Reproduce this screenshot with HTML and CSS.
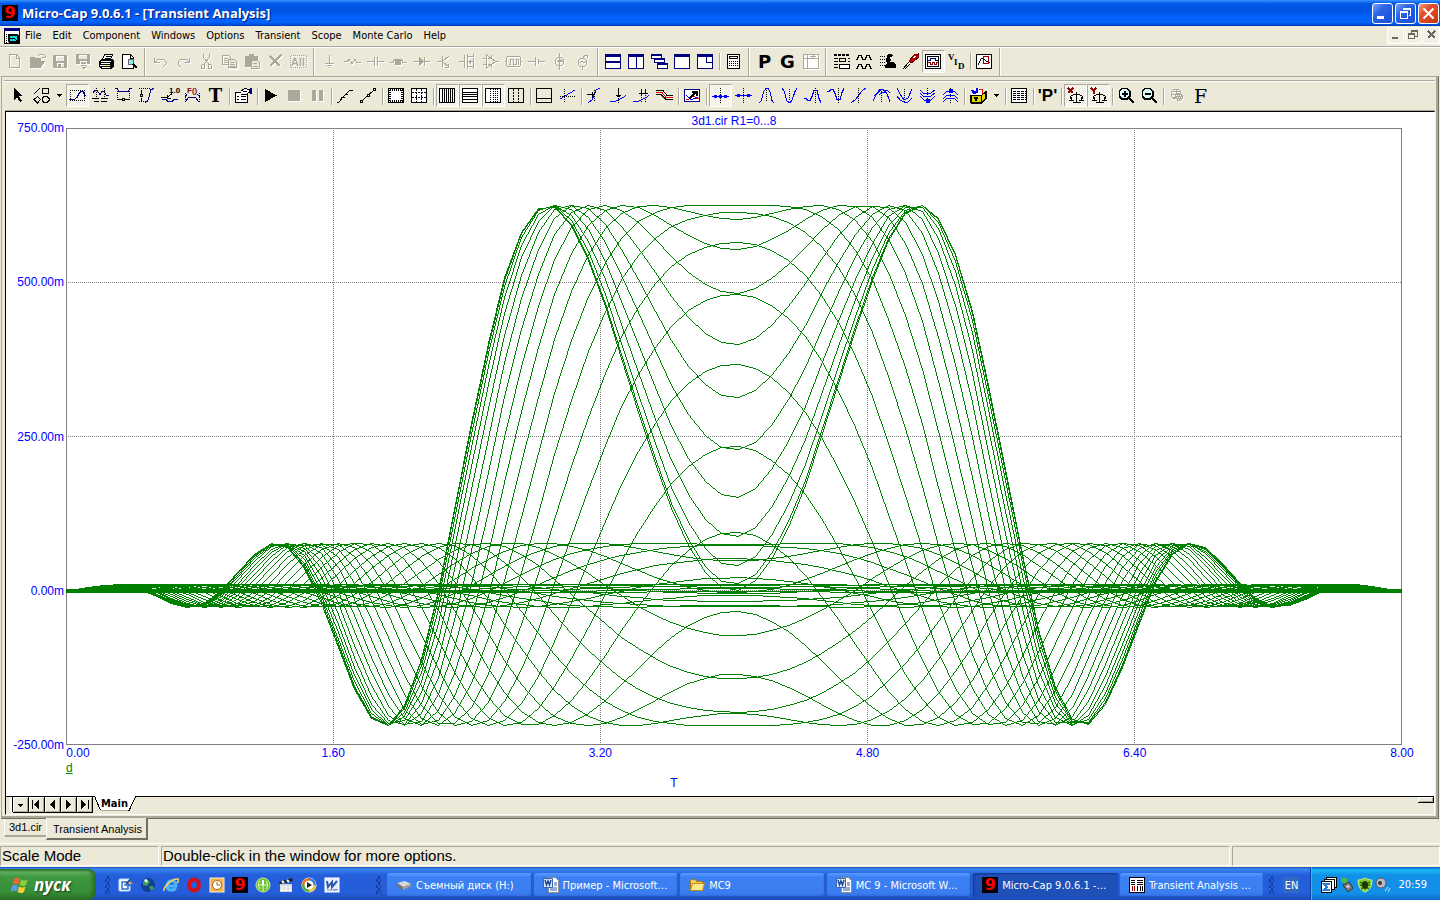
FILE: index.html
```html
<!DOCTYPE html>
<html lang="en">
<head>
    <meta charset="UTF-8">
    <meta name="viewport" content="width=device-width, initial-scale=1.0">
    <title>Micro-Cap 9.0.6.1 - [Transient Analysis]</title>
    <link rel="stylesheet" href="styles.css">
</head>
<body>

    <header class="title-bar">
        <span class="mc-logo">9</span>
        <h1>Micro-Cap 9.0.6.1 - [Transient Analysis]</h1>
        <div class="window-buttons">
            <button aria-label="Minimize"><svg viewBox="0 0 19 19"><path class="fw" d="M4 12h7v3H4z"/></svg></button>
            <button aria-label="Restore"><svg viewBox="0 0 19 19"><path class="w" d="M7.5 6V4.5h7v7H13M7 5.5h8M4.5 7.5h7v7h-7zM4 8.5h8"/></svg></button>
            <button class="close" aria-label="Close"><svg viewBox="0 0 19 19"><path class="w thick soft" d="M4.5 4.5l10 10M14.5 4.5l-10 10"/></svg></button>
        </div>
    </header>

    <nav class="menu-bar">
        <svg class="doc-icon" viewBox="0 0 17 17"><path class="fw" d="M0 0h16v16H0z"/><path class="fn" d="M0 0h16v3H0z"/><path d="M.5 3V15.500h15V3"/><path fill="#00e0e0" d="M5 7h9v7H5z"/><path d="M4.5 6.5h9v7h-9zM5 12l2-2h3l2 2h1"/><path class="dot" d="M2.5 6v9"/></svg>
        <button>File</button>
        <button>Edit</button>
        <button>Component</button>
        <button>Windows</button>
        <button>Options</button>
        <button>Transient</button>
        <button>Scope</button>
        <button>Monte Carlo</button>
        <button>Help</button>
        <div class="child-buttons">
            <button aria-label="Minimize document"><svg viewBox="0 0 15 15"><path class="thick" d="M4 10h6"/></svg></button>
            <button aria-label="Restore document"><svg viewBox="0 0 15 15"><path d="M5.5 5V2.5h6v6H9M5 3.5h7M2.5 5.5h6v5h-6zM2 6.5h7"/></svg></button>
            <button aria-label="Close document"><svg viewBox="0 0 15 15"><path class="thick" d="M4 3l7 7M11 3l-7 7"/></svg></button>
        </div>
    </nav>

    <div class="toolbar main-tools">
        <div class="group off">
            <button aria-label="New"><svg viewBox="0 0 17 17"><path d="M3.5 1.5h7l3 3v10h-10zM10.5 2v3h3"/></svg></button>
            <button aria-label="Open"><svg viewBox="0 0 17 17"><path class="fc" d="M1 4h4l1 1h6v3h4l-4 7H1z"/><path d="M9 3l2-2h3l2 2v2M13 4h3"/></svg></button>
            <button aria-label="Save"><svg viewBox="0 0 17 17"><path class="fc" fill-rule="evenodd" d="M1 2h14v13H2l-1-1zM4 3v5h8V3zM5 10v4h1v-3h3v3h3v-4z"/></svg></button>
            <button aria-label="Save as"><svg viewBox="0 0 17 17"><path class="fc" fill-rule="evenodd" d="M1 1h14v10H1zM4 2v4h8V2zM5 8v3h1V9h5v2h1V8zM6 12h5v2H6zM5 13h7l-3 4z"/></svg></button>
            <button class="on" aria-label="Print"><svg viewBox="0 0 17 17"><path class="fw" d="M4 7l2-6h8l-2 6z"/><path d="M4.5 6.5l2-5h8l-2 5M8 3.5h5M7 5.5h5"/><path class="fk" d="M1 8l3-2h11l1 2v5l-3 3H3l-2-2z"/><path class="w" d="M3 8.5h10M2 12.5h9"/><path class="y" d="M8 12.5h4"/><path class="w" d="M3 10.5h9M4 14.5h8"/></svg></button>
            <button class="on" aria-label="Print preview"><svg viewBox="0 0 17 17"><path class="fw" d="M1.5 1.5h8l3 3v11h-11z"/><path d="M1.5 1.5h8l3 3v11h-11zM9.5 2v3h3"/><circle cx="10" cy="9" r="3" fill="#8ee" stroke="#666"/><path class="thick" d="M12 11l4 4"/></svg></button>
        </div>
        <div class="group off">
            <button aria-label="Undo"><svg viewBox="0 0 17 17"><path d="M2.5 5v5M2.5 9.5h5M3 9l3-3h5l3 3v2l-2 2h-1"/></svg></button>
            <button aria-label="Redo"><svg viewBox="0 0 17 17"><path d="M14.5 5v5M14.5 9.5h-5M14 9l-3-3H6L3 9v2l2 2h1"/></svg></button>
            <button aria-label="Cut"><svg viewBox="0 0 17 17"><path d="M5.5 1v3l5 7M11.5 1v3l-5 7M8.5 7v2"/><path d="M4.5 11.5h2v4h-3v-3zM10.5 11.5h2l1 1v3h-3z"/></svg></button>
            <button aria-label="Copy"><svg viewBox="0 0 17 17"><path d="M1.5 2.5h6l2 2v7h-8zM3 5.5h4M3 7.5h5M3 9.5h4"/><path class="fb" d="M7 6h7l3 3v7H7z"/><path d="M7.5 6.5h6l2 2v6h-8zM9 9.5h4M9 11.5h5M9 13.5h5"/></svg></button>
            <button aria-label="Paste"><svg viewBox="0 0 17 17"><path class="fc" d="M1 3h4V1h5v2h4v11H1z"/><path class="fb" d="M7 8h8v8H7z"/><path d="M7.5 7.5h6l2 2v6h-8zM9 10.5h4M9 13.5h5"/></svg></button>
            <button aria-label="Delete"><svg viewBox="0 0 17 17"><path class="thick" d="M3 3l10 10M14 2L3 13"/></svg></button>
            <button aria-label="Select all"><svg viewBox="0 0 17 17"><path class="dot" d="M.5 2.5h16M.5 14.5h16M.5 2.5v12M16.5 2.5v12"/><text x="1" y="13" font-size="11">All</text></svg></button>
        </div>
        <div class="group off">
            <button aria-label="Ground"><svg viewBox="0 0 17 17"><path d="M8.5 2v8M4 10.5h9M6 12.5h5M8 14.5h1"/></svg></button>
            <button aria-label="Resistor"><svg viewBox="0 0 17 17"><path d="M0 8.5h3l2-2 3 4 3-4 2 3h4"/></svg></button>
            <button aria-label="Capacitor"><svg viewBox="0 0 17 17"><path d="M0 8.5h7M7.5 4v9M10.5 4v9M11 8.5h6"/></svg></button>
            <button aria-label="Inductor"><svg viewBox="0 0 17 17"><path d="M0 9.5h3.5V8l1.500-1.500L6.500 8v3h-1V8L7 6.500 8.500 8v3h-1V8L9 6.500 10.500 8v3h-1V8L11 6.500 12.500 8v1.500H17"/></svg></button>
            <button aria-label="Diode"><svg viewBox="0 0 17 17"><path d="M0 8.5h17M11.5 4v9"/><path class="fc" d="M6 4l5 5-5 4z"/></svg></button>
            <button aria-label="NPN transistor"><svg viewBox="0 0 17 17"><path d="M1 8.5h5M6.5 3v11M7 8l6-5M7 9l6 5M12.5 11v3M9 14.5h4"/></svg></button>
            <button aria-label="MOSFET"><svg viewBox="0 0 17 17"><path d="M0 8.5h5M5.5 2v13M8.5 1v15M9 3.5h5V1M9 8.5h5M9 13.5h5V16M14.5 5v8"/><path class="fc" d="M9 9l3-3v6z"/></svg></button>
            <button aria-label="Op amp"><svg viewBox="0 0 17 17"><path d="M4.5 2v13l9-6.500zM1 5.5h3M1 11.5h3M13 8.5h4M9.5 2v3M9.5 12v3M6 5.5h2M6 11.5h2"/></svg></button>
            <button aria-label="Pulse source"><svg viewBox="0 0 17 17"><path d="M2.5 3.5h12l1 1v8l-1 1h-12l-1-1v-8zM4 11.5h1.500v-5h3v5h3v-5h2v5M0 8.5h1M16 8.5h1"/></svg></button>
            <button aria-label="Battery"><svg viewBox="0 0 17 17"><path d="M0 8.5h7M7.5 4v9M10.5 6v5M11 8.5h6"/></svg></button>
            <button aria-label="Current source"><svg viewBox="0 0 17 17"><path d="M8.5 0v17M6.5 4.5h4l2 2v4l-2 2h-4l-2-2v-4z"/><path class="fc" d="M6 9l3-4 3 4z"/></svg></button>
            <button aria-label="Sine source"><svg viewBox="0 0 17 17"><path d="M6.5 5.5h4l2 2v4l-2 2h-4l-2-2v-4zM9 5l2-3h3M8.5 14v3M13.5 2v3M6 10l2-2 2 2 2-2"/></svg></button>
        </div>
        <div class="group navy">
            <button aria-label="Tile horizontal"><svg viewBox="0 0 17 17"><path class="fw" d="M1 1h15v15H1z"/><path d="M.5 1.5h15v14H.5z"/><path class="thick" d="M1 3h15M1 9h15"/></svg></button>
            <button aria-label="Tile vertical"><svg viewBox="0 0 17 17"><path class="fw" d="M1 1h15v15H1z"/><path d="M.5 1.5h15v14H.5zM8.5 2v14"/><path class="thick" d="M1 3h15"/></svg></button>
            <button aria-label="Cascade"><svg viewBox="0 0 17 17"><path class="fw" d="M1 1h10v4h3v5h3v5H6v-4H3V6H1z"/><path d="M.5 1.5h10v4H.5zM3.5 5.5h10v4h-10zM6.5 10.500h10v5h-10z"/><path class="thick" d="M1 2h10M4 6h10M7 11h10"/></svg></button>
            <button aria-label="Maximize"><svg viewBox="0 0 17 17"><path class="fw" d="M1 1h15v15H1z"/><path d="M.5 1.5h15v14H.5z"/><path class="thick" d="M1 3h15"/></svg></button>
            <button aria-label="Overlap"><svg viewBox="0 0 17 17"><path class="fw" d="M1 1h15v15H1z"/><path d="M.5 1.5h15v14H.5zM9.5 3v6h6"/><path class="thick" d="M1 3h15"/></svg></button>
            <i class="sep"></i>
            <button class="black" aria-label="Calculator"><svg viewBox="0 0 17 17"><path class="fw" d="M2 1h13v14H2z"/><path d="M2.5 1.5h12v14h-12zM4.5 3.5h8v2h-8z"/><path class="dot" d="M4 8.5h10M4 10.500h10M4 12.500h10"/></svg></button>
        </div>
        <div class="group">
            <button class="letter">P</button>
            <button class="letter">G</button>
            <button class="dim" aria-label="Spreadsheet"><svg viewBox="0 0 17 17"><path class="fw" d="M1 1h16v15H1z"/><path d="M1.5 1.5h15v14h-15zM2 5.5h14M5.5 2v14M11.5 2v3M8 3.5h6"/></svg></button>
        </div>
        <div class="group">
            <button aria-label="Components panel"><svg viewBox="0 0 17 17"><path class="dash" d="M1 2h15"/><path d="M1 5.5h4M1 8.5h4M1 11.5h4M1 14.5h4M6.5 5.5h6v3h-6zM15 5.5h2M15 8.5h2"/><path class="fw" d="M7 11h9v4H7z"/><path d="M6.5 11.5h10v4h-10z"/></svg></button>
            <button aria-label="Waveforms"><svg viewBox="0 0 17 17"><path d="M0 6.500h1l2-4h2l2 4h2l2-4h2l2 4h1M0 15.500h1l2-4h2l2 4h2l2-4h2l2 4h1"/></svg></button>
            <button aria-label="Animate"><svg viewBox="0 0 17 17"><path class="dot" d="M1 3.5h6M1 6.5h5M1 9.5h6M1 12.5h6"/><path class="fk" d="M9 1h4l1 2-3 1 1 3-2 2h4l3 3v3H6v-3l2-1-1-4z"/></svg></button>
            <button aria-label="Probe"><svg viewBox="0 0 17 17"><path d="M1 16l6-7M3 16l5-5"/><path fill="#d00000" stroke="#600" d="M7 8l5-6 4-1v4L9 10z"/><path class="w" d="M11 5l3-2"/></svg></button>
            <button class="pressed" aria-label="Run analysis"><svg viewBox="0 0 17 17"><path class="fw" d="M1 1h15v15H1z"/><path d="M.5 1.5h15v14H.5zM2.5 3.5h11v10h-11z"/><path class="n" d="M3 7.500h2v-2h5v2h3"/><path class="r" d="M3 9.500h2v2h2v-2h2v2h2v-2h2"/></svg></button>
            <button class="vid" aria-label="Values"><svg viewBox="0 0 17 17"><text x="0" y="7" font-size="9">V</text><text x="6" y="12" font-size="9">I</text><text x="10" y="16" font-size="9">D</text></svg></button>
            <i class="sep"></i>
            <button aria-label="Thumbnail plot"><svg viewBox="0 0 17 17"><path class="fw" d="M1 1h15v15H1z"/><path d="M.5 1.5h15v14H.5zM2 12l3-6 2-1 3 3 4 2"/><path class="r" d="M7.5 3.5h5v7h-5z"/></svg></button>
        </div>
    </div>

    <main class="mdi">
        <div class="toolbar scope-tools">
            <button aria-label="Select"><svg viewBox="0 0 17 17"><path class="fk" d="M4 1l8 8H9l3 5-2 1-3-5-3 3z"/></svg></button>
            <button aria-label="Graphics"><svg viewBox="0 0 17 17"><path d="M1 7l6-6M9.5 1.5h6v5h-6zM1 12.500l3.500-3 3 3-3 3.500zM11 9.5h3l2 2v2l-2 2h-3l-2-2v-2z"/></svg></button>
            <button class="drop" aria-label="More graphics"><svg viewBox="0 0 5 3"><path class="fk" d="M0 0h5L2.500 3z"/></svg></button>
            <button class="pressed" aria-label="Scale mode"><svg viewBox="0 0 17 17"><path class="dot" d="M1 3.500h15M1 13.500h15M1.500 3v11M15.500 3v11"/><path class="n" d="M0 12.500h5l3-2 2-4 2-2h2l2 4h1"/></svg></button>
            <button aria-label="Cursor mode"><svg viewBox="0 0 17 17"><path class="n" d="M1 6l2-3h2l3 5 2-4h2l2 4h3"/><path class="dot" d="M4.500 1v9M12.500 1v9"/><path d="M0 11.500h7M9 11.500h7M2 14.500h5M9 14.500h6"/></svg></button>
            <button aria-label="Horizontal tag"><svg viewBox="0 0 17 17"><path class="n" d="M0 1.500h2l2 3h9l2-3h2"/><path class="dot" d="M2.500 4v10M14.500 4v10"/><path d="M3 12.500h4M10 12.500h4M7.500 11.500h2v2h-2z"/></svg></button>
            <button aria-label="Vertical tag"><svg viewBox="0 0 17 17"><path class="n" d="M7 15.500l3-2 3-11 3-1"/><path class="dot" d="M1 1.500h12M1 14.500h9"/><path d="M3.500 3v4M3.500 11v3M2.500 7.500h2v2h-2z"/></svg></button>
            <button aria-label="Point tag"><svg viewBox="0 0 17 17"><path class="n" d="M1 12.500h4l2 2h4l2-2h4"/><path d="M0 10.500h6l5-4M6.500 8v3h3"/><text x="8" y="6" font-size="8">1.0</text></svg></button>
            <button aria-label="Performance tag"><svg viewBox="0 0 17 17"><text class="red" x="3" y="6" font-size="8">F()</text><path class="n" d="M1 15l4-5h6l4 5M3 7l-2 3M13 7l3 3"/><path class="dot" d="M1.500 6v9M15.500 6v9"/></svg></button>
            <button class="letter serif">T</button>
            <i class="sep"></i>
            <button aria-label="Properties"><svg viewBox="0 0 17 17"><path class="fw" d="M1 6h12v10H1z"/><path d="M.5 5.5h12v10H.5zM2 9.5h2M2 12.500h2M6 9.500h5M6 12.500h5"/><path class="fw" d="M6 3l4-2 4 1v4l-3 2-5-1z"/><path d="M6 4l4-2.500 4 1v3l-3 2H6M8 4.500h4"/><path class="n thick" d="M16 1v6"/></svg></button>
            <i class="sep"></i>
            <button aria-label="Run"><svg viewBox="0 0 17 17"><path class="fk" d="M2 2l12 6.500L2 15z"/></svg></button>
            <button class="dim" aria-label="Stop"><svg viewBox="0 0 17 17"><path class="fc" d="M2 3h12v11H2z"/></svg></button>
            <button class="dim" aria-label="Pause"><svg viewBox="0 0 17 17"><path class="fc" d="M3 3h4v11H3zM10 3h4v11h-4z"/></svg></button>
            <i class="sep"></i>
            <button aria-label="Data points"><svg viewBox="0 0 17 17"><path d="M0 15h2l4-5 4-4 3-3h3M4 10.500h4M8 7.500h3"/></svg></button>
            <button aria-label="Tokens"><svg viewBox="0 0 17 17"><path d="M2.500 13.500l12-11"/><path class="token" d="M.5 13.500h2v2h-2zM7.500 7.500h2v2h-2zM13.500 1.500h2v2h-2z"/></svg></button>
            <i class="sep"></i>
            <button aria-label="Ruler"><svg viewBox="0 0 17 17"><path class="fw" d="M1 1h14v14H1z"/><path d="M.5 1.500h15v14H.5z"/><path class="thick dot" d="M2 3h13M2 14h13M2 3v11M14 3v11"/></svg></button>
            <button aria-label="Plus mark"><svg viewBox="0 0 17 17"><path class="fw" d="M1 1h14v14H1z"/><path d="M.5 1.500h15v14H.5z"/><path class="dash-1" d="M1 5.500h14M1 10.500h14M5.500 2v13M10.500 2v13"/></svg></button>
            <i class="sep"></i>
            <button class="pressed" aria-label="Horizontal axis grids"><svg viewBox="0 0 17 17"><path class="fw" d="M1 1h14v14H1z"/><path d="M.5 1.500h15v14H.5zM3.500 1v14M5.500 1v14M7.500 1v14M9.500 1v14M11.500 1v14M13.500 1v14"/></svg></button>
            <button class="pressed" aria-label="Vertical axis grids"><svg viewBox="0 0 17 17"><path class="fw" d="M1 1h14v14H1z"/><path d="M.5 1.500h15v14H.5zM1 5.500h14M1 7.500h14M1 9.500h14M1 12.500h14"/></svg></button>
            <button class="pressed" aria-label="Minor log grids"><svg viewBox="0 0 17 17"><path class="fw" d="M1 1h14v14H1z"/><path d="M.5 1.500h15v14H.5z"/><path class="dot" d="M5.500 2v13M8.500 2v13M10.500 2v13M12.500 2v13"/></svg></button>
            <button aria-label="Major grids"><svg viewBox="0 0 17 17"><path d="M.5 1.500h15v14H.5z"/><path class="dash-1" d="M5.500 2v13M10.500 2v13"/></svg></button>
            <i class="sep"></i>
            <button aria-label="Baseline"><svg viewBox="0 0 17 17"><path d="M.5 1.500h15v14H.5zM1 11.500h14"/></svg></button>
            <button aria-label="Horizontal cursor"><svg viewBox="0 0 17 17"><path class="b" d="M1 12l15-9"/><path class="dot" d="M5.500 2v13M1 9.500h15"/></svg></button>
            <i class="sep"></i>
            <button aria-label="Left cursor"><svg viewBox="0 0 17 17"><path class="b" d="M1 16l4-3 4-10 4-2"/><path d="M0 7.500h7M5.500 5v5"/><path class="dot" d="M7.500 3v11"/></svg></button>
            <button aria-label="Right cursor"><svg viewBox="0 0 17 17"><path class="b" d="M0 14.500h5l4-2 4-2 3-2"/><path d="M8.500 1v9M6 8.500h5M7 9.500h3"/><path class="dot" d="M8.500 11v6"/></svg></button>
            <button aria-label="Both cursors"><svg viewBox="0 0 17 17"><path class="b" d="M0 14.500h5l4-2 4-2 3-2"/><path class="dot" d="M8.500 8v8M12.500 8v8"/><path d="M8.500 2v7M12.500 2v5M6 6.500h9"/></svg></button>
            <button aria-label="Same Y scales"><svg viewBox="0 0 17 17"><path d="M0 3.500h7l4 5h6M0 7.500h5l5 5h7"/><path class="red-line" d="M0 5.500h6l4 5h7"/></svg></button>
            <i class="sep"></i>
            <button aria-label="Thumbnail"><svg viewBox="0 0 17 17"><path class="fw" d="M1 2h15v12H1z"/><path class="n" d="M.5 2.500h15v12H.5z"/><path class="red-line" d="M2 12h3l2-3h3l2 2h3"/><path class="b" d="M2 8l4 4h3l5-2"/><path class="thick" d="M5 12l7-7M8 5h5v4"/></svg></button>
            <i class="sep"></i>
            <button class="pressed" aria-label="Next simulation point"><svg viewBox="0 0 17 17"><path class="dot" d="M8.500 1v16"/><path class="b" d="M0 9.500h17"/><path class="fblue" d="M2 8h3v3H2zM7 8h3v3H7zM12 8h3v3h-3z"/></svg></button>
            <button aria-label="Next interpolated point"><svg viewBox="0 0 17 17"><path class="dot" d="M8.500 1v16"/><path class="b" d="M0 8.500h17"/><path class="fblue" d="M2 7h3v3H2zM12 7h3v3h-3z"/></svg></button>
            <button aria-label="Peak"><svg viewBox="0 0 17 17"><path class="dot" d="M8.500 3v12"/><path class="b" d="M1 16l2-2 3-10 2-2.500h2l2 3 2 9 2 2.500"/></svg></button>
            <button aria-label="Valley"><svg viewBox="0 0 17 17"><path class="dot" d="M8.500 2v12"/><path class="b" d="M1 1l2 3 3 10 2 1.500h1l2-2 3-9 2-3"/></svg></button>
            <button aria-label="High"><svg viewBox="0 0 17 17"><path class="dot" d="M11.500 1v15"/><path class="b" d="M0 11.500h2l2 2h2l2-4 2-6h3l2 8 2 4"/></svg></button>
            <button aria-label="Low"><svg viewBox="0 0 17 17"><path class="dot" d="M11.500 1v15"/><path class="b" d="M0 4.500h2l2-2h2l2 4 2 6h3l2-7 2-4"/></svg></button>
            <button aria-label="Inflection"><svg viewBox="0 0 17 17"><path class="dot" d="M8.500 1v15"/><path class="b" d="M1 16l4-3 7-9 4-3"/></svg></button>
            <button aria-label="Top"><svg viewBox="0 0 17 17"><path class="dot" d="M8.500 2v13"/><path class="b" d="M0 14l3-6 4-6h3l4 5 3 8M1 9l4-3 3-3M10 3l4 0 3 3M6 8l3-3h4l3 6"/></svg></button>
            <button aria-label="Bottom"><svg viewBox="0 0 17 17"><path class="dot" d="M8.500 2v13"/><path class="b" d="M1 1l3 6 4 6 4-2 4-9M1 9l3 4 4 2h4l4-4"/></svg></button>
            <button aria-label="Global low"><svg viewBox="0 0 17 17"><path class="dot" d="M8.500 1v15"/><path class="b" d="M1 3l3 3h8l4-3M1 6l3 3h8l4-3M1 9l4 4h7l4-4"/><path class="fblue" d="M7 12h4v4H7z"/></svg></button>
            <button aria-label="Global high"><svg viewBox="0 0 17 17"><path class="dot" d="M8.500 1v15"/><path class="b" d="M1 8l4-4h7l4 4M1 12l4-4h7l4 4M1 15l4-4h7l4 4"/><path class="fblue" d="M7 2h4v4H7z"/></svg></button>
            <i class="sep"></i>
            <button aria-label="Go to"><svg viewBox="0 0 17 17"><path class="fw" d="M3 1h9v7H3z"/><path class="b thick" d="M2 3l3 4M7 1v5M2 5h5"/><path class="red-line" d="M9 2h3v5"/><path fill="#e0d800" d="M1 8h11l3-3v7l-3 4H1z"/><path d="M.5 8.500h11v7H.5zM12 8l4-3v7l-4 3"/><path class="thick" d="M6 10v4M4 11h4"/></svg></button>
            <button class="drop" aria-label="More destinations"><svg viewBox="0 0 5 3"><path class="fk" d="M0 0h5L2.500 3z"/></svg></button>
            <i class="sep"></i>
            <button aria-label="Numeric output"><svg viewBox="0 0 17 17"><path class="fw" d="M1 1h15v15H1z"/><path d="M.5 1.500h15v14H.5z"/><path class="table-dash" d="M2 4.500h13M2 6.500h13M2 8.500h13M2 10.500h13M2 12.500h13"/></svg></button>
            <i class="sep"></i>
            <button class="letter tick">'P'</button>
            <i class="sep"></i>
            <button class="pressed" aria-label="Normalize X"><svg viewBox="0 0 17 17"><path class="r thick" d="M1 1l5 5M6 1L1 6"/><path d="M9.500 5v10M6 15.500h8M3 9.500l4-2h5l4 2M2 13.500h5M4.500 10v3M12 13.500h5M14.500 10v3M3 12l1-2M15 10l1 2"/></svg></button>
            <button class="pressed" aria-label="Normalize Y"><svg viewBox="0 0 17 17"><path class="r thick" d="M1 1l3 3M6 1L4 3v4"/><path d="M9.500 5v10M6 15.500h8M3 9.500l4-2h5l4 2M2 13.500h5M4.500 10v3M12 13.500h5M14.500 10v3M3 12l1-2M15 10l1 2"/></svg></button>
            <i class="sep"></i>
            <button aria-label="Zoom in"><svg viewBox="0 0 17 17"><path fill="#dff" d="M4 1.500h5l3 3v5l-3 3H4l-3-3v-5z"/><path d="M4 1.500h5l2.500 3v4l-3 3H4l-2.500-3v-4z"/><path class="thick" d="M4 7h6M7 4v6M11 11l5 5"/></svg></button>
            <button aria-label="Zoom out"><svg viewBox="0 0 17 17"><path fill="#dff" d="M4 1.500h5l3 3v5l-3 3H4l-3-3v-5z"/><path d="M4 1.500h5l2.500 3v4l-3 3H4l-2.500-3v-4z"/><path class="thick" d="M4 7h6M11 11l5 5"/></svg></button>
            <i class="sep"></i>
            <button class="dim" aria-label="Color"><svg viewBox="0 0 17 17"><circle cx="7" cy="7" r="5"/><path d="M2 7.500h10M7.500 2v10M4 4.500h7M4 10.500h7"/><circle class="fc" cx="10" cy="10" r="4"/><path class="w dot" d="M7 8.500h6M8 10.500h6M7 12.500h6"/></svg></button>
            <button class="letter thin">F</button>
        </div>

        <section class="chart-window">
            <div class="chart">
                <h2 class="chart-title">3d1.cir R1=0...8</h2>
                <div class="y-axis">
                    <span>750.00m</span>
                    <span>500.00m</span>
                    <span>250.00m</span>
                    <span>0.00m</span>
                    <span>-250.00m</span>
                </div>
                <div class="plot" id="plot">
                    <canvas id="curves"></canvas>
                </div>
                <div class="x-axis">
                    <div class="x-labels">
                        <span>0.00</span>
                        <span>1.60</span>
                        <span>3.20</span>
                        <span>4.80</span>
                        <span>6.40</span>
                        <span>8.00</span>
                    </div>
                    <a class="trace" href="#plot">d</a>
                    <div class="x-title">T</div>
                </div>
            </div>
            <div class="sheet-bar">
                <i class="grip"></i>
                <button aria-label="Page list"><svg viewBox="0 0 13 13"><path class="fk" d="M4 6h5L6.500 9z"/></svg></button>
                <button aria-label="First page"><svg viewBox="0 0 13 13"><path class="fk" d="M2 2h1v9H2zM9 2v9L4 6.500z"/></svg></button>
                <button aria-label="Previous page"><svg viewBox="0 0 13 13"><path class="fk" d="M9 2v9L4 6.500z"/></svg></button>
                <button aria-label="Next page"><svg viewBox="0 0 13 13"><path class="fk" d="M4 2v9l5-4.500z"/></svg></button>
                <button aria-label="Last page"><svg viewBox="0 0 13 13"><path class="fk" d="M3 2v9l5-4.500zM10 2h1v9h-1z"/></svg></button>
                <div class="sheet-tab">
                    <svg viewBox="0 0 7 15"><path class="fw" d="M0 0h7v15z"/><path d="M.5 0l6 14.500"/></svg>
                    <button>Main</button>
                    <svg viewBox="0 0 9 15"><path class="fw" d="M0 0h8L1 15H0z"/><path d="M8 0L1 14.500H0"/></svg>
                </div>
                <i class="splitter"></i>
            </div>
        </section>
    </main>

    <div class="doc-tabs">
        <button>3d1.cir</button>
        <button class="active">Transient Analysis</button>
    </div>

    <footer class="status-bar">
        <span class="mode">Scale Mode</span>
        <span class="hint">Double-click in the window for more options.</span>
        <span class="extra"></span>
    </footer>

    <div class="taskbar">
        <button class="start">
            <svg viewBox="0 0 20 18"><path fill="#f2653a" d="M4 3c2-2 4-1 6 0L8.500 8.500C6.500 7.500 5 7.500 2.500 9z"/><path fill="#8bcf3c" d="M11 3.500c2 1 4 1.500 6.500 0L16 9c-2 1.500-4 1-6.500 0z"/><path fill="#5a9cf0" d="M2 10c2-1.500 4-1.500 6 0l-1.500 5.500c-2-1-4-1-6 0z"/><path fill="#fccd3a" d="M9 10.500c2 1 4 1.500 6.500 0L14 16c-2 1.500-4 1-6.500 0z"/></svg>
            пуск
        </button>
        <i class="handle"></i>
        <div class="quick-launch">
            <button aria-label="Show desktop"><svg class="soft" viewBox="0 0 16 16"><rect fill="#fff" stroke="#bcdcfa" x="2" y="2" width="11" height="12" rx="1"/><path stroke="#2a74c8" stroke-width="1.500" d="M10 5H5v7h6V9M7 8h5M10 6l3 2-3 2"/><path stroke="#1b4f9f" stroke-width="2" d="M9 7l5-5"/><path stroke="#e8842c" stroke-width="2" d="M13 5l2 2"/></svg></button>
            <button aria-label="Globe"><svg class="soft" viewBox="0 0 16 16"><circle fill="#123f96" cx="8" cy="8" r="7"/><path fill="#3f9a5c" d="M3 4l4-2 3 3-3 4-4-1zM9 9l4 0 1 3-3 2z"/><path fill="#e6f6ff" d="M4 3l2-1 2 2-2 2z"/></svg></button>
            <button aria-label="Internet Explorer"><svg class="soft" viewBox="0 0 16 16"><path stroke="#4cb6f8" stroke-width="3" d="M4 9h9c0-7-9-7-9 0 0 5 7 5 8.500 2"/><path stroke="#fcd85a" stroke-width="1.500" d="M1 14c-1-4 9-13 14-12 1 1 0 3-1 4"/></svg></button>
            <button aria-label="Opera"><svg class="soft" viewBox="0 0 16 16"><ellipse stroke="#d80f16" stroke-width="4" cx="8" cy="8" rx="5" ry="5.500"/></svg></button>
            <button aria-label="Outlook"><svg class="soft" viewBox="0 0 16 16"><rect fill="#f3b04b" stroke="#fff3d0" x="1" y="1" width="14" height="14"/><circle fill="#fff" stroke="#a4671c" cx="8" cy="8" r="4.500"/><path stroke="#a4671c" d="M8 5v3h3"/></svg></button>
            <button aria-label="Micro-Cap"><span class="mc-logo">9</span></button>
            <button aria-label="Antenna"><svg class="soft" viewBox="0 0 16 16"><circle fill="#6cc032" stroke="#c9f08a" cx="8" cy="8" r="7"/><path stroke="#e6ffd0" d="M8 4v10M5 4c-2 3-2 5 0 8M11 4c2 3 2 5 0 8M3 8h10"/><path fill="#fff" d="M7 3h2v5H7z"/></svg></button>
            <button aria-label="Media Player Classic"><svg class="soft" viewBox="0 0 16 16"><path fill="#222" d="M1 5l13-4 1 3-13 3z"/><path fill="#d8d8d8" d="M2 7h12v8H2z"/><path stroke="#fff" stroke-width="2" d="M4 4l2 2M9 3l2 2"/><text x="2" y="14" font-size="7">321</text></svg></button>
            <button aria-label="Windows Media Player"><svg class="soft" viewBox="0 0 16 16"><circle fill="#f5f5f5" cx="8" cy="8" r="7.500"/><path stroke="#e8721c" stroke-width="3" d="M2.500 8c0-3 2-5.500 5.500-5.500"/><path stroke="#3a7bd8" stroke-width="3" d="M8 2.500c3 0 5.500 2 5.500 5.500"/><path stroke="#4ba83a" stroke-width="3" d="M2.500 8c0 3 2 5.500 5.500 5.500"/><path stroke="#f0c22c" stroke-width="3" d="M13.500 8c0 3-2 5.500-5.500 5.500"/><circle fill="#fff" cx="8" cy="8" r="4.500"/><path fill="#222" d="M6 5l5 3-5 3z"/></svg></button>
            <button aria-label="Word"><svg class="soft" viewBox="0 0 16 16"><rect fill="#e8eefa" stroke="#fff" x="1" y="1" width="14" height="14"/><path stroke="#2a56a8" stroke-width="2" d="M3 4l1 6 4-5 0 5 5-6"/><path stroke="#7b98cf" d="M9 12.500h5M3 13h10"/></svg></button>
        </div>
        <i class="handle"></i>
        <div class="tasks">
            <button><svg class="soft" viewBox="0 0 16 16"><path fill="#d8d8d4" d="M1 6l8-2 6 3-8 3z"/><path fill="#77756c" d="M1 6l6 4v3L1 9z"/><path fill="#a4a298" d="M7 10l8-3v2l-8 4z"/></svg><span>Съемный диск (H:)</span></button>
            <button><svg class="soft" viewBox="0 0 16 16"><path fill="#fff" stroke="#8d8d8d" d="M5.500.5h7l3 3v12h-10z"/><path stroke="#2c5ba8" d="M11 6h3M11 8h3M7 11h7M7 13h7"/><path fill="#e4ecfa" stroke="#3a64b0" d="M.5 1.500h9v9H.5z"/><path stroke="#1d4a9e" stroke-width="1.500" d="M2 3l1.500 5L5 4l1.500 4L8 3"/></svg><span>Пример - Microsoft Word</span></button>
            <button><svg class="soft" viewBox="0 0 16 16"><path fill="#f5cf55" stroke="#a97b12" d="M1.500 13.500v-10l1-1h4l1 2h6v9z"/><path fill="#ffe88c" stroke="#b98f20" d="M1.500 13.500l2-7h12l-2 7z"/></svg><span>MC9</span></button>
            <button><svg class="soft" viewBox="0 0 16 16"><path fill="#fff" stroke="#8d8d8d" d="M5.500.5h7l3 3v12h-10z"/><path stroke="#2c5ba8" d="M11 6h3M11 8h3M7 11h7M7 13h7"/><path fill="#e4ecfa" stroke="#3a64b0" d="M.5 1.500h9v9H.5z"/><path stroke="#1d4a9e" stroke-width="1.500" d="M2 3l1.500 5L5 4l1.500 4L8 3"/></svg><span>MC 9 - Microsoft Word</span></button>
            <button class="active"><i class="mc-logo">9</i><span>Micro-Cap 9.0.6.1 - [Transient Analysis]</span></button>
            <button><svg viewBox="0 0 16 16"><path class="fw" d="M0 0h16v16H0z"/><path stroke="#000" d="M.5.5h15v15H.5zM2 3.500h4M8 3.500h6M2 5.500h4M8 5.500h6M2 7.500h4M8 7.500h6M8.500 9v5M11.500 9v5M13.500 9v5"/><path class="r" d="M3.500 9v5M5.500 9v5"/></svg><span>Transient Analysis Limits</span></button>
        </div>
        <i class="handle"></i>
        <button class="lang">EN</button>
        <div class="tray">
            <svg viewBox="0 0 16 16"><path fill="#fff" stroke="#000" d="M5.500.5h10v10h-10z"/><path fill="#fff" stroke="#000" d="M3.500 2.500h10v10h-10z"/><path fill="#fff" stroke="#000" d="M.5 4.500h10v11H.5z"/><path stroke="#2c7bd0" stroke-width="2" d="M9 7H3l3 3-3 3h6"/></svg>
            <svg class="soft" viewBox="0 0 16 16"><path fill="#50b848" d="M2 1l6 0 1 5-3 1-4-3z"/><path fill="#7b7b80" stroke="#333" d="M4 8l6-3 4 6-5 4z"/><path fill="#d8d8d8" d="M7 9l3-1 1 2-3 1z"/></svg>
            <svg class="soft" viewBox="0 0 16 16"><path fill="#7fd02a" stroke="#cdf08a" d="M1 3c3 0 5-1 7-2 2 1 4 2 7 2 0 6-2 10-7 12C3 13 1 9 1 3z"/><ellipse fill="#1b3a08" cx="8" cy="8" rx="3" ry="4"/><path stroke="#1b3a08" d="M3 5l4 2M3 8h10M4 12l3-2M13 5L9 7M12 12l-3-2"/></svg>
            <svg class="soft" viewBox="0 0 16 16"><ellipse fill="#b8bcc4" stroke="#55585f" cx="6" cy="6" rx="5" ry="5"/><circle fill="#33363c" cx="5" cy="6" r="2"/><path stroke="#cde" d="M10 14l3-4M13 15l2-4"/></svg>
            <time>20:59</time>
        </div>
    </div>

    <script>
        const plot = document.getElementById('plot');
        const canvas = document.getElementById('curves');
        const ctx = canvas.getContext('2d');

        const T_MAX = 8;
        const V_TOP = 0.75;
        const V_BOTTOM = -0.25;

        // damped sine over the squared distance from (4, 4)
        function d(t, r1) {
            const u = (t - 4) ** 2 + (r1 - 4) ** 2;
            return Math.exp(-u / 3) * Math.sin(u);
        }

        // plain one pixel line, no smoothing
        function line(x0, y0, x1, y1) {
            const dx = Math.abs(x1 - x0);
            const dy = -Math.abs(y1 - y0);
            const sx = x0 < x1 ? 1 : -1;
            const sy = y0 < y1 ? 1 : -1;
            let err = dx + dy;
            while (true) {
                ctx.fillRect(x0, y0, 1, 1);
                if (x0 === x1 && y0 === y1) break;
                const e2 = 2 * err;
                if (e2 >= dy) { err += dy; x0 += sx; }
                if (e2 <= dx) { err += dx; y0 += sy; }
            }
        }

        function draw() {
            const w = canvas.width = plot.clientWidth;
            const h = canvas.height = plot.clientHeight;
            const px = t => Math.round(t / T_MAX * (w - 1));
            const py = v => Math.round((V_TOP - v) / (V_TOP - V_BOTTOM) * (h - 1));

            // grid
            ctx.fillStyle = '#808080';
            for (let i = 1; i < 5; i++) {
                for (let y = 0; y < h; y += 2) ctx.fillRect(px(i * 1.6), y, 1, 1);
            }
            for (let i = 1; i < 4; i++) {
                for (let x = 0; x < w; x += 2) ctx.fillRect(x, py(V_TOP - i * 0.25), 1, 1);
            }
            ctx.fillRect(0, 0, w, 1);
            ctx.fillRect(0, h - 1, w, 1);
            ctx.fillRect(0, 0, 1, h);
            ctx.fillRect(w - 1, 0, 1, h);

            // time points of the solver
            const times = [0];
            for (let k = 0; k < 80; k++) times.push(0.027 + k * 0.1);
            times.push(T_MAX);

            ctx.fillStyle = '#008000';
            for (let n = 0; n <= 80; n++) {
                const r1 = n * 0.1;
                for (let i = 1; i < times.length; i++) {
                    line(px(times[i - 1]), py(d(times[i - 1], r1)), px(times[i]), py(d(times[i], r1)));
                }
            }
        }

        window.addEventListener('resize', draw);
        draw();
    </script>

</body>
</html>
```
FILE: styles.css
```css
* {
    box-sizing: border-box;
}

body {
    margin: 0;
    height: 100vh;
    display: flex;
    flex-direction: column;
    overflow: hidden;
    background: #ece9d8;
    color: #000;
    font-family: "DejaVu Sans Condensed", "Noto Sans", sans-serif;
    font-size: 11px;
}

button {
    border: none;
    background: none;
    padding: 0;
    margin: 0;
    color: inherit;
    font: inherit;
}

h1,
h2 {
    margin: 0;
}

/* Icons */
svg {
    display: block;
    flex: none;
    fill: none;
    stroke: currentColor;
    stroke-width: 1px;
    shape-rendering: crispEdges;
}

svg.soft,
.soft {
    shape-rendering: auto;
}

svg.soft {
    stroke: none;
}

svg text {
    fill: currentColor;
    stroke: none;
    font-family: "Liberation Sans", sans-serif;
    font-weight: bold;
}

.fw { fill: #fff; stroke: none; }
.fk { fill: #000; stroke: none; }
.fc { fill: currentColor; stroke: none; }
.fb { fill: #ece9d8; stroke: none; }
.fn { fill: #000080; stroke: none; }
.fblue { fill: #00f; stroke: none; }
.token { fill: #fff; }
.w { stroke: #fff; }
.y { stroke: #ff0; }
.b { stroke: #00f; }
.n { stroke: #000080; }
.r { stroke: #900000; }
.red-line { stroke: #f00000; }
.thick { stroke-width: 2px; }
.dot { stroke-dasharray: 1 1; }
.dash { stroke-width: 2px; stroke-dasharray: 3 1; }
.dash-1 { stroke-dasharray: 2 1; }
.table-dash { stroke-dasharray: 3 1; }
svg text.red { fill: #900000; }

.mc-logo {
    display: block;
    flex: none;
    width: 16px;
    height: 16px;
    background: #000;
    color: #f00;
    font: bold 16px/16px "DejaVu Sans", sans-serif;
    text-align: center;
}

/* Title bar */
.title-bar {
    display: flex;
    align-items: center;
    flex: none;
    height: 26px;
    padding: 0 1px 0 2px;
    background: linear-gradient(#3a93ff 0, #1570f4 2px, #0057e3 4px, #0055e5 12px, #0262fb 17px, #0566ff 22px, #0048d0 25px, #003bb5 26px);
    color: #fff;
}

.title-bar h1 {
    flex: 1;
    margin-left: 4px;
    font: bold 13px/26px "Open Sans", sans-serif;
    text-shadow: 1px 1px 1px #0a1883;
    white-space: nowrap;
}

.window-buttons {
    display: flex;
    gap: 2px;
}

.window-buttons button {
    width: 21px;
    height: 21px;
    border: 1px solid #fff;
    border-radius: 3px;
    background: linear-gradient(135deg, #7da5f5 0, #2f66e4 35%, #2056dd 70%, #1d4fd0);
}

.window-buttons .close {
    background: linear-gradient(135deg, #f0a08a 0, #e0522c 35%, #d8431c 70%, #b93413);
}

.window-buttons svg {
    width: 19px;
    height: 19px;
}

/* Menu */
.menu-bar {
    display: flex;
    align-items: center;
    flex: none;
    height: 20px;
    padding: 0 0 2px 4px;
    gap: 11px;
}

.menu-bar .doc-icon {
    width: 17px;
    height: 17px;
    margin: 2px -7px 0 0;
}

.child-buttons {
    display: flex;
    gap: 1px;
    margin-left: auto;
    color: #6a675c;
}

.child-buttons button {
    width: 17px;
    height: 17px;
    border: 1px solid #fff;
    background: #f3f1e7;
}

.child-buttons svg {
    width: 15px;
    height: 15px;
}

/* Toolbars */
.toolbar {
    display: flex;
    flex: none;
    border-top: 1px solid #aca899;
    box-shadow: inset 0 1px #fff;
}

.toolbar button {
    display: flex;
    align-items: center;
    justify-content: center;
    width: 23px;
    height: 23px;
    border: 1px solid transparent;
}

.toolbar svg {
    width: 17px;
    height: 17px;
    overflow: visible;
}

.toolbar .pressed {
    border-color: #aca899 #fff #fff #aca899;
    background: repeating-conic-gradient(#fff 0 25%, #ece9d8 0 50%) 0 0 / 2px 2px;
}

.toolbar .letter {
    font: bold 18px/20px "DejaVu Sans", sans-serif;
}

.toolbar .serif {
    font-family: "DejaVu Serif", serif;
}

.toolbar .thin {
    font: 19px/20px "DejaVu Serif", serif;
}

.toolbar .tick {
    font: bold 17px/20px "Liberation Sans", sans-serif;
}

.toolbar .drop {
    width: 13px;
}

.toolbar .drop svg {
    width: 5px;
    height: 3px;
}

.vid text {
    font-family: "Liberation Serif", serif;
}

.sep {
    flex: none;
    width: 5px;
    height: 17px;
    margin: 3px 0;
    background: linear-gradient(90deg, transparent 2px, #aca899 2px 3px, #fff 3px 4px, transparent 4px);
}

.main-tools {
    height: 30px;
}

.group {
    display: flex;
    margin-top: 1px;
    padding: 2px 3px 0;
    border-right: 1px solid #fff;
    box-shadow: inset -1px 0 #aca899;
}

.group::after {
    content: "";
    width: 1px;
}

.off,
.dim {
    color: #aca899;
}

.off button:not(.on) svg,
.dim svg {
    filter: drop-shadow(1px 1px 0 #fff);
}

.on,
.black {
    color: #000;
}

.navy {
    color: #000080;
}

.navy .black {
    color: #000;
}

/* Document window */
.mdi {
    display: flex;
    flex-direction: column;
    flex: 1;
    min-height: 0;
    margin: 0 1px;
    padding: 3px 2px 3px 2px;
    border-top: 1px solid #aca899;
    border-left: 1px solid #aca899;
    border-right: 1px solid #716f64;
    border-bottom: 1px solid #716f64;
    box-shadow: inset -2px -2px #aca899;
}

.scope-tools {
    height: 31px;
    margin-right: 1px;
    padding: 3px 0 0 3px;
}

.scope-tools .sep {
    margin: 4px 0;
}

.chart-window {
    display: flex;
    flex-direction: column;
    flex: 1;
    min-height: 0;
    margin: 0 1px;
    border-top: 1px solid #000;
    border-left: 1px solid #000;
    border-right: 1px solid #fff;
    border-bottom: 1px solid #fff;
    box-shadow: 0 -1px #aca899;
}

.chart {
    display: grid;
    grid-template-columns: 60px 1fr 32px;
    grid-template-rows: 16px 1fr 51px;
    flex: 1;
    min-height: 0;
    background: #fff;
    color: #00f;
    font: 12px/14px "Liberation Sans", sans-serif;
}

.chart-title {
    grid-column: 2;
    padding-top: 2px;
    font: inherit;
    text-align: center;
}

.y-axis {
    grid-column: 1;
    grid-row: 2;
    display: flex;
    flex-direction: column;
    justify-content: space-between;
    margin: -7px 0;
    padding-right: 2px;
    text-align: right;
}

.plot {
    grid-column: 2;
    grid-row: 2;
    position: relative;
    min-height: 0;
}

.plot canvas {
    position: absolute;
    top: 0;
    left: 0;
}

.x-axis {
    grid-column: 2;
    grid-row: 3;
    padding-top: 1px;
}

.x-labels {
    display: flex;
    justify-content: space-between;
    margin: 0 -12px;
}

.x-labels span {
    width: 24px;
    text-align: center;
}

.x-labels span:first-child {
    margin: 0 -12px 0 12px;
}

.trace {
    display: block;
    width: 8px;
    margin: 1px 0;
    color: #008000;
}

.x-title {
    padding-right: 120px;
    text-align: center;
}

.sheet-bar {
    display: flex;
    align-items: flex-start;
    flex: none;
    height: 18px;
    border-top: 1px solid #000;
}

.sheet-bar .grip {
    width: 6px;
    height: 15px;
    margin-left: 1px;
    background: #fff;
    border-left: 3px solid #ece9d8;
    border-right: 1px solid #000;
}

.sheet-bar > button {
    width: 16px;
    height: 16px;
    padding: 0 1px;
    border: 1px solid #000;
    border-width: 0 1px 1px 0;
    box-shadow: inset 1px 1px #fff, inset -1px -1px #aca899;
}

.sheet-bar > button svg {
    width: 13px;
    height: 13px;
}

.sheet-tab {
    display: flex;
    height: 15px;
    margin: -1px 0 0 1px;
}

.sheet-tab button {
    background: #fff;
    border-bottom: 1px solid #aca899;
    font: bold 11px/15px "DejaVu Sans Condensed", sans-serif;
}

.sheet-tab svg {
    height: 15px;
}

.splitter {
    width: 16px;
    height: 6px;
    margin-left: auto;
    background: #ece9d8;
    border-right: 1px solid #000;
    border-bottom: 1px solid #000;
    box-shadow: inset 1px 1px #fff, inset -1px -1px #aca899;
}

/* Document tabs */
.doc-tabs {
    display: flex;
    align-items: flex-start;
    flex: none;
    height: 24px;
    padding-left: 4px;
    font: 11px/16px "Liberation Sans", sans-serif;
}

.doc-tabs button {
    height: 18px;
    padding: 0 4px;
    border-left: 1px solid #fff;
    border-bottom: 2px solid #aca899;
}

.doc-tabs .active {
    height: 22px;
    margin-top: -1px;
    padding: 2px 4px 0 6px;
    background: #ece9d8;
    border-right: 2px solid #716f64;
    border-bottom: 2px solid #716f64;
}

/* Status bar */
.status-bar {
    display: flex;
    flex: none;
    gap: 2px;
    height: 24px;
    padding: 2px 0 1px;
    border-top: 1px solid #fff;
    font: 15px/18px "Liberation Sans", sans-serif;
    white-space: nowrap;
}

.status-bar span {
    padding: 0 1px;
    border: 1px solid #aca899;
    border-color: #aca899 #fff #fff #aca899;
}

.status-bar .mode {
    width: 159px;
}

.status-bar .hint {
    flex: 1;
}

.status-bar .extra {
    width: 208px;
}

/* Taskbar */
.taskbar {
    display: flex;
    align-items: stretch;
    flex: none;
    height: 33px;
    background: linear-gradient(#1f4fb8 0, #3a86f0 2px, #2f78ea 4px, #245edb 8px, #245edb 26px, #1c49b4 33px);
    color: #fff;
}

.start {
    display: flex;
    align-items: center;
    gap: 4px;
    width: 96px;
    margin-top: 2px;
    padding-left: 10px;
    border-radius: 0 8px 8px 0;
    background: linear-gradient(#2d7a2d 0, #62b062 3px, #3f983f 8px, #379037 22px, #2a742a 31px);
    box-shadow: inset -3px 0 4px #236a23;
    font: italic bold 17px/30px "Open Sans", sans-serif;
    text-shadow: 1px 1px 2px #1a3f1a;
}

.start svg {
    width: 20px;
    height: 18px;
    stroke: none;
    shape-rendering: auto;
}

.handle {
    flex: none;
    width: 5px;
    margin: 9px 0 6px 9px;
    background: conic-gradient(#143f9e 25%, transparent 0 50%, #143f9e 0 75%, transparent 0) 0 0 / 4px 6px;
}

.quick-launch {
    display: flex;
    align-items: center;
    margin: 2px 23px 0 4px;
}

.quick-launch button {
    width: 23px;
    padding: 0 3px;
}

.quick-launch svg,
.tasks svg,
.tray svg {
    width: 16px;
    height: 16px;
}

.tasks {
    display: flex;
    flex: 1;
    gap: 2px;
    min-width: 0;
    margin-right: -4px;
    padding: 6px 0 3px 6px;
}

.tasks button {
    display: flex;
    flex: 1 1 0;
    align-items: center;
    gap: 4px;
    min-width: 0;
    padding: 0 10px 0 9px;
    border-radius: 3px;
    background: linear-gradient(#5a9bff 0, #3c81f3 4px, #3a7df0 20px, #2f6ce0);
    box-shadow: inset -1px -1px 1px #2457c4;
}

.tasks span {
    flex: 1;
    overflow: hidden;
    text-align: left;
    text-overflow: ellipsis;
    white-space: nowrap;
}

.tasks .active {
    background: #1e50b8;
    box-shadow: inset 1px 1px 2px #143a8c;
}

.lang {
    width: 16px;
    height: 16px;
    margin: 10px 11px 0 9px;
    background: #316ac5;
}

.tray {
    display: flex;
    align-items: center;
    gap: 2px;
    padding: 2px 13px 0 10px;
    border-left: 1px solid #0c3fae;
    background: linear-gradient(#0c5cc8 0, #19b9f3 3px, #1290e8 8px, #1290e8 26px, #0d6ec9 33px);
    box-shadow: inset 1px 0 #2bbdf5;
}

.tray time {
    margin-left: 5px;
}
```
